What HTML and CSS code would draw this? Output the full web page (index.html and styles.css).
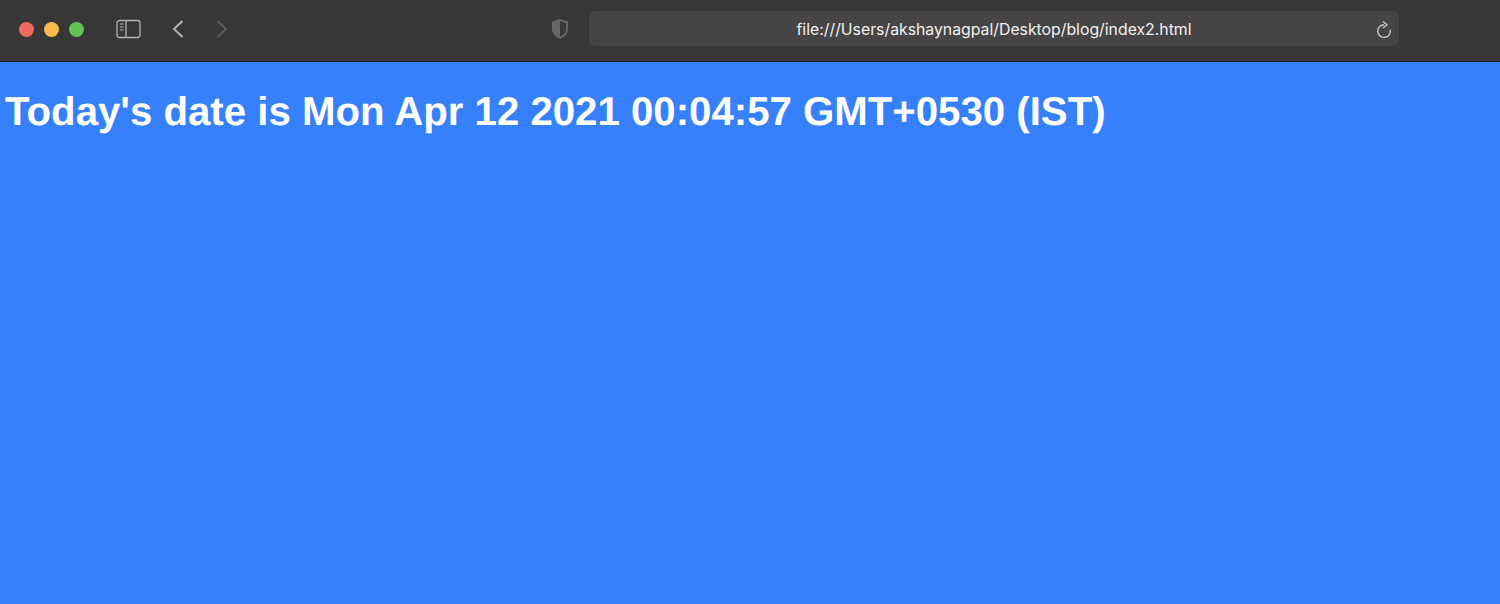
FILE: index.html
```html
<!DOCTYPE html>
<html>
<head>
  <title>Date Page</title>
  <link rel="stylesheet" href="styles.css">
</head>
<body>
  <header class="toolbar">
    <div class="lights">
      <span class="light red"></span>
      <span class="light yellow"></span>
      <span class="light green"></span>
    </div>
    <svg class="sidebar-icon" width="26" height="20" viewBox="0 0 26 20" fill="none" stroke="#b4b4b4">
      <rect x="1" y="1.5" width="23" height="17" rx="2.5" stroke-width="1.3"/>
      <path d="M10 1.5V18.5" stroke-width="1.3"/>
      <path d="M4 5H7.5M4 8H7.5M4 11H7.5" stroke-width="1.1"/>
    </svg>
    <svg class="nav-icon back" width="14" height="20" viewBox="0 0 14 20" fill="none" stroke="#b8b8b8" stroke-width="1.8">
      <path d="M11.5 2L3 10L11.5 18"/>
    </svg>
    <svg class="nav-icon forward" width="14" height="20" viewBox="0 0 14 20" fill="none" stroke="#5e5e5e" stroke-width="1.8">
      <path d="M2.5 2L11 10L2.5 18"/>
    </svg>
    <svg class="shield" width="18" height="22" viewBox="0 0 18 22">
      <path d="M9 1L17 3.5V11C17 15.5 13.5 19 9 21C4.5 19 1 15.5 1 11V3.5Z" fill="#666"/>
      <path d="M9 3L15 5V11C15 14.5 12.5 17 9 18.8Z" fill="#3b3a3a"/>
    </svg>
    <div class="address-bar">
      <span class="url">file:///Users/akshaynagpal/Desktop/blog/index2.html</span>
      <svg class="reload" width="18" height="20" viewBox="0 0 18 20" fill="none" stroke="#c8c8c8" stroke-width="1.4">
        <path d="M9 4.8A6.3 6.3 0 1 0 15.2 9.6"/>
        <path d="M8 1.5L12 4.8L8 8"/>
      </svg>
    </div>
  </header>

  <main class="content">
    <h1>Today's date is Mon Apr 12 2021 00:04:57 GMT+0530 (IST)</h1>
  </main>
</body>
</html>
```

FILE: styles.css
```css
body, h1 {
  margin: 0;
  padding: 0;
}

body {
  font-family: "Liberation Sans", Arial, sans-serif;
  background-color: #3680fb;
  height: 604px;
  overflow: hidden;
}

.toolbar {
  box-sizing: border-box;
  height: 62px;
  background-color: #383636;
  border-bottom: 1px solid #1e1e1e;
  display: flex;
  align-items: center;
  padding-left: 19px;
  padding-bottom: 3px;
}

.lights {
  display: flex;
  gap: 10px;
}

.light {
  width: 15px;
  height: 15px;
  border-radius: 50%;
}

.red {
  background-color: #ee6a5f;
}

.yellow {
  background-color: #f5bd4f;
}

.green {
  background-color: #61c454;
}

.sidebar-icon {
  margin-left: 32px;
}

.back {
  margin-left: 29px;
}

.forward {
  margin-left: 30px;
}

.shield {
  margin-left: 322px;
}

.address-bar {
  box-sizing: border-box;
  width: 810px;
  height: 35px;
  margin-left: 20px;
  margin-bottom: 2px;
  padding-top: 2px;
  background-color: #464444;
  border-radius: 7px;
  display: flex;
  align-items: center;
  justify-content: center;
  position: relative;
}

.url {
  color: #f2f2f2;
  font-family: Inter, "Liberation Sans", sans-serif;
  font-size: 15.8px;
}

.reload {
  position: absolute;
  right: 6px;
  top: 9px;
}

.content {
  padding: 25px 5px 0;
}

.content h1 {
  color: #fff;
  font-size: 40.2px;
  line-height: 50px;
  font-weight: bold;
  white-space: nowrap;
  text-rendering: geometricPrecision;
}
```
